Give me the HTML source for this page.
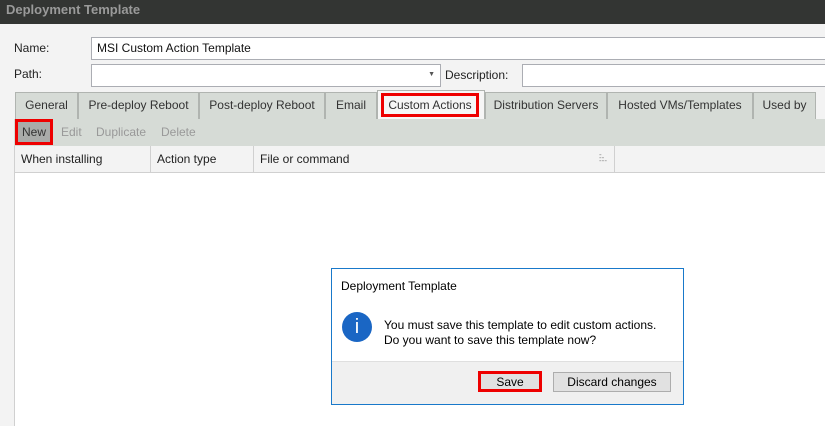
<!DOCTYPE html><html><head><style>
*{box-sizing:border-box;margin:0;padding:0}
body{width:825px;height:426px;overflow:hidden;background:#f3f3f3;font-family:"Liberation Sans",sans-serif;font-size:12px;color:#222;position:relative}
.a{position:absolute}
.inp{position:absolute;background:#fff;border:1px solid #abadb3}
.tab{position:absolute;top:92px;height:27px;background:#d6dbd6;border:1px solid #b0b4b0;border-bottom:none;line-height:25px;text-align:center;color:#333}
.tb{position:absolute;top:125px;color:#999}
.btn{position:absolute;background:#e1e1e1;border:1px solid #adadad;text-align:center;line-height:18px;color:#000}
</style></head><body>
<div class="a" style="left:0;top:0;width:825px;height:24px;background:#333533;color:#9a9a9a;font-weight:bold;font-size:13px;line-height:20px;padding-left:6px">Deployment Template</div>
<div class="a" style="left:14px;top:41px">Name:</div>
<div class="inp" style="left:91px;top:37px;width:740px;height:23px;padding:3px 5px;color:#111">MSI Custom Action Template</div>
<div class="a" style="left:14px;top:67px">Path:</div>
<div class="inp" style="left:91px;top:64px;width:350px;height:23px"><span class="a" style="right:5px;top:6px;font-size:7px;color:#555">▼</span></div>
<div class="a" style="left:445px;top:68px">Description:</div>
<div class="inp" style="left:522px;top:64px;width:310px;height:23px"></div>
<div class="tab" style="left:15px;width:63px">General</div>
<div class="tab" style="left:78px;width:121px">Pre-deploy Reboot</div>
<div class="tab" style="left:199px;width:126px">Post-deploy Reboot</div>
<div class="tab" style="left:325px;width:52px">Email</div>
<div class="tab" style="left:377px;top:90px;height:29px;width:108px;background:#f6f6f6"><div class="a" style="left:3px;top:2px;width:98px;height:24px;border:3px solid #e00;line-height:18px">Custom Actions</div></div>
<div class="tab" style="left:485px;width:122px">Distribution Servers</div>
<div class="tab" style="left:607px;width:146px">Hosted VMs/Templates</div>
<div class="tab" style="left:753px;width:63px">Used by</div>
<div class="a" style="left:14px;top:119px;width:811px;height:27px;background:#d6dbd6"></div>
<div class="a" style="left:15px;top:119px;width:38px;height:26px;background:#a9aba9;border:3px solid #e00;line-height:20px;text-align:center;color:#333">New</div>
<div class="tb" style="left:61px">Edit</div>
<div class="tb" style="left:96px">Duplicate</div>
<div class="tb" style="left:161px">Delete</div>
<div class="a" style="left:14px;top:146px;width:811px;height:27px;background:#f3f3f3;border-bottom:1px solid #d0d0d0;border-left:1px solid #d0d0d0"></div>
<div class="a" style="left:150px;top:146px;width:1px;height:26px;background:#d0d0d0"></div>
<div class="a" style="left:253px;top:146px;width:1px;height:26px;background:#d0d0d0"></div>
<div class="a" style="left:614px;top:146px;width:1px;height:26px;background:#d0d0d0"></div>
<div class="a" style="left:21px;top:152px">When installing</div>
<div class="a" style="left:157px;top:152px">Action type</div>
<div class="a" style="left:260px;top:152px">File or command</div>
<div class="a" style="left:599px;top:153px;font-size:8px;color:#888;line-height:3px">-<br>--<br>---</div>
<div class="a" style="left:14px;top:173px;width:811px;height:253px;background:#fff;border-left:1px solid #d0d0d0"></div>
<div class="a" style="left:331px;top:268px;width:353px;height:137px;background:#fff;border:1px solid #1979ca">
<div class="a" style="left:9px;top:10px;color:#000">Deployment Template</div>
<div class="a" style="left:10px;top:43px;width:30px;height:30px;border-radius:50%;background:#1a66c4;color:#fff;text-align:center;font-size:20px;line-height:30px;font-family:'Liberation Sans',sans-serif">i</div>
<div class="a" style="left:52px;top:49px;color:#000;line-height:15px">You must save this template to edit custom actions.<br>Do you want to save this template now?</div>
<div class="a" style="left:0;top:92px;width:351px;height:43px;background:#f0f0f0;border-top:1px solid #dfdfdf"></div>
<div class="btn" style="left:146px;top:102px;width:64px;height:21px;border:3px solid #e00;line-height:16px">Save</div>
<div class="btn" style="left:221px;top:103px;width:118px;height:20px">Discard changes</div>
</div>
</body></html>
